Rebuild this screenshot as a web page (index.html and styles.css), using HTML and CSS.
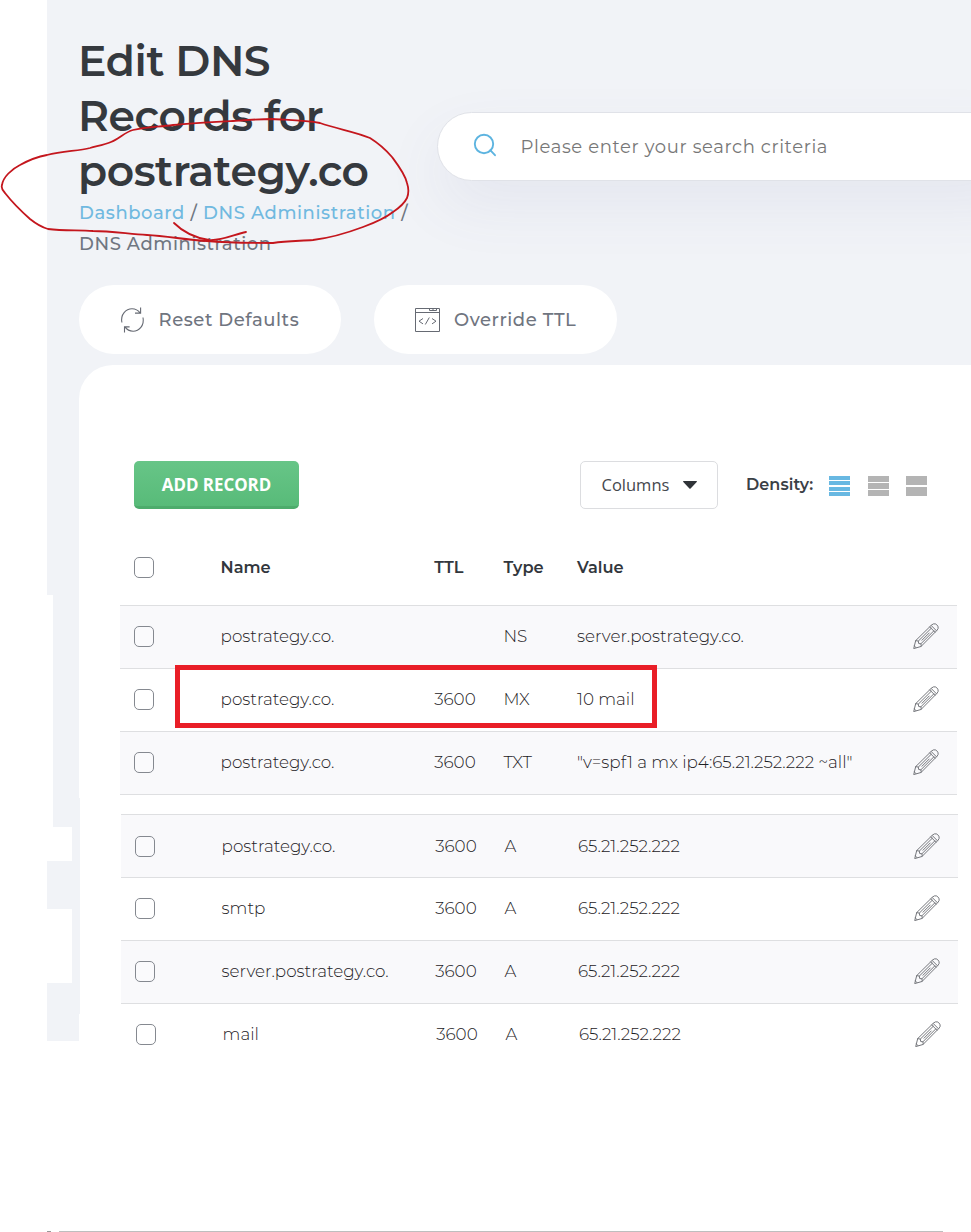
FILE: index.html
```
<!DOCTYPE html>
<html lang="en">
<head>
<meta charset="utf-8">
<title>Edit DNS Records</title>
<link rel="stylesheet" href="styles.css">
</head>
<body>
<svg class="defs" width="0" height="0">
  <symbol id="pencil" viewBox="0 0 26 26">
    <g fill="none" stroke="#75777c" stroke-width="1" stroke-linejoin="round" stroke-linecap="round">
      <path d="M.8 25.2 2.7 17.6 18.7 1.9Q20.5.2 22.8 1L25 3.2Q25.8 5.5 24 7.3L8.3 23.2Z"/>
      <path d="M2.7 17.6 5.3 18.1 5.7 20.5 7.9 20.8 8.3 23.2M1.4 23 3 24.6"/>
      <path d="M5.3 18.1 18.3 5.2M7.9 20.8 20.8 7.9M9 17.2 16.2 10"/>
      <path d="M16.7 3.9 22 9.2M18.2 2.5 23.5 7.8"/>
    </g>
  </symbol>
</svg>
<div class="page">
  <main class="app">
    <header class="header">
      <div class="heading">
        <h1 class="title">Edit DNS<br>Records for<br>postrategy.co</h1>
        <nav class="crumbs"><a>Dashboard</a><span class="slash">/</span><a>DNS Administration</a><span class="slash">/</span><br><span>DNS Administration</span></nav>
      </div>
      <div class="search">
        <svg class="search-icon" width="24" height="24" viewBox="0 0 24 24" fill="none" stroke="#5db4e0" stroke-width="1.9"><circle cx="11" cy="11" r="9.2"/><path d="M17.2 17.2 22 22.2" stroke-linecap="round"/></svg>
        <span class="placeholder">Please enter your search criteria</span>
      </div>
    </header>
    <div class="actions">
      <div class="pill reset">
        <svg width="25" height="26" viewBox="0 0 25 26" fill="none" stroke="#666a73" stroke-width="1.1"><path d="M1.9 15.5C.3 7.5 6 1.8 12 1.8c3.6 0 6.1 1.4 8.2 4.3M20.6.5v5.6H15"/><path d="M23 10.5C24.6 18.5 19 24.2 13.1 24.2c-3.6 0-6.1-1.4-8.2-4.3M4.5 25.5v-5.6h5.1"/></svg>
        <span>Reset Defaults</span>
      </div>
      <div class="pill override">
        <svg width="26" height="25" viewBox="0 0 26 25" fill="none" stroke="#666a73" stroke-width="1"><path d="M1.5 1.5h24v23h-24zM1.5 5.5h24M15.5 1.5v2h7v-2M19 1.5v2"/><path d="m9 11.5-4 2.7 4 2.7M18 11.5l4 2.7-4 2.7M15.3 10.5l-4 7"/></svg>
        <span>Override TTL</span>
      </div>
    </div>
    <section class="card">
      <div class="toolbar">
        <button class="add">ADD RECORD</button>
        <button class="columns"><span>Columns</span><svg width="14" height="8" viewBox="0 0 14 8"><path d="M.5 0h13q.8.2.2 1L7.6 7.5q-.6.6-1.2 0L.3 1Q-.2.2.5 0z" fill="#2f3338"/></svg></button>
        <span class="density">Density:</span>
        <span class="bars four"><i></i><i></i><i></i><i></i></span>
        <span class="bars three"><i></i><i></i><i></i></span>
        <span class="bars two"><i></i><i></i></span>
      </div>
      <div class="row head"><i class="box"></i><b>Name</b><b>TTL</b><b>Type</b><b>Value</b></div>
      <div class="group">
        <div class="row shade up"><i class="box"></i><span>postrategy.co.</span><span></span><span>NS</span><span>server.postrategy.co.</span><svg class="pencil"><use href="#pencil"/></svg></div>
        <div class="row up"><i class="box"></i><span>postrategy.co.</span><span>3600</span><span>MX</span><span>10 mail</span><svg class="pencil"><use href="#pencil"/></svg></div>
        <div class="row shade last up"><i class="box"></i><span>postrategy.co.</span><span>3600</span><span>TXT</span><span>"v=spf1 a mx ip4:65.21.252.222 ~all"</span><svg class="pencil"><use href="#pencil"/></svg></div>
      </div>
      <div class="group lower">
        <div class="row shade"><i class="box"></i><span>postrategy.co.</span><span>3600</span><span>A</span><span>65.21.252.222</span><svg class="pencil"><use href="#pencil"/></svg></div>
        <div class="row up"><i class="box"></i><span>smtp</span><span>3600</span><span>A</span><span>65.21.252.222</span><svg class="pencil"><use href="#pencil"/></svg></div>
        <div class="row shade up"><i class="box"></i><span>server.postrategy.co.</span><span>3600</span><span>A</span><span>65.21.252.222</span><svg class="pencil"><use href="#pencil"/></svg></div>
        <div class="row shifted up"><i class="box"></i><span>mail</span><span>3600</span><span>A</span><span>65.21.252.222</span><svg class="pencil"><use href="#pencil"/></svg></div>
      </div>
    </section>
  </main>
  <footer class="rule"><i class="dot"></i><i class="line"></i></footer>
  <div class="patch a"></div>
  <div class="patch b"></div>
  <div class="patch c"></div>
  <div class="sliver"></div>
  <div class="marker"></div>
  <svg class="scribble" width="420" height="260" viewBox="0 0 420 260" fill="none" stroke="#c4161d" stroke-width="1.8" stroke-linecap="round"><path d="M2 185C3 177 12 169 20 165C29 160 36 157 47 155C63 151 78 151 90 148C97 146 104 145 111 142C119 139 125 132 133 130C146 127 158 127 173 125C192 123 213 122 233 121C247 120 258 119 273 119C289 120 305 120 320 123C337 129 356 132 370 138C378 143 386 150 392 157C398 165 405 174 407 183C409 189 409 193 407 198C404 204 399 208 393 212C384 219 374 223 363 227C347 233 330 238 313 240C299 241 286 241 273 243C250 243 229 243 207 241C187 240 167 236 147 235C129 234 111 231 93 231C78 230 63 231 48 229C41 227 35 223 30 219C21 211 12 202 5 193C2 190 1 188 2 185Z"/><path d="M174 223C184 233 196 238 209 240C222 241 235 234 246 232"/></svg>
</div>
</body>
</html>
```
FILE: styles.css
```
* { box-sizing: border-box; }
body { margin: 0; background: #fff; font-family: Montserrat, Inter, "Noto Sans", sans-serif; color: #3a4046; }
.defs { position: absolute; }
.page { position: relative; width: 971px; height: 1232px; overflow: hidden; display: flex; flex-direction: column; justify-content: space-between; }
.app { margin-left: 47px; height: 1041px; background: #f1f3f7; padding: 33px 0 0 32px; }
.header { display: flex; height: 252px; white-space: nowrap; }
.heading { width: 358px; }
.title { margin: 0 0 0 -1px; padding-top: 1px; font-size: 42.5px; line-height: 55px; height: 165px; font-weight: 600; letter-spacing: -.45px; color: #35393e; }
.crumbs { font-size: 18px; font-weight: 500; line-height: 31px; color: #6f7681; letter-spacing: .58px; }
.crumbs a { color: #70b9e0; }
.slash { padding: 0 5.6px; }
.search { flex: 1; height: 69px; margin: 79px -60px 0 0; border: 1px solid #e0e2e8; border-radius: 35px; background: #fff; display: flex; align-items: center; padding-left: 35px; box-shadow: 0 25px 60px rgba(90, 90, 150, .08); }
.placeholder { font-size: 18px; font-weight: 400; color: #777; letter-spacing: .62px; margin-left: 23.5px; }
.search-icon { margin-top: -3px; }
.actions { display: flex; gap: 33px; height: 80px; }
.pill { height: 69px; border-radius: 35px; background: #fff; display: flex; align-items: center; font-size: 18px; font-weight: 500; color: #70757f; white-space: nowrap; letter-spacing: .56px; }
.reset { width: 262px; padding-left: 41px; gap: 13.5px; }
.override { width: 243px; padding-left: 40px; gap: 14px; }
.card { background: #fff; height: 690px; border-radius: 34px 0 0 0; padding: 96px 0 0 41px; }
.toolbar { display: flex; align-items: center; height: 48px; padding-left: 14px; margin-bottom: 20px; }
.add { width: 165px; height: 48px; border: 0; border-bottom: 3px solid #4dac6c; border-radius: 5px; background: linear-gradient(#67c587, #58bb79); color: #fff; font: 700 16.9px "Open Sans", sans-serif; padding: 2px 0 0; }
.columns { margin-left: 281px; width: 138px; height: 48px; border: 1px solid #dcdde0; border-radius: 5px; background: #fff; color: #44484d; font: 400 16.5px "Open Sans", sans-serif; display: flex; align-items: center; padding: 0 0 1px 20.5px; gap: 13.5px; }
.density { font-size: 16px; font-weight: 600; letter-spacing: .1px; margin-left: 28px; width: 83px; padding-bottom: 2px; }
.bars { width: 21px; height: 20px; display: flex; flex-direction: column; justify-content: space-between; margin: 2px 0 0 18px; }
.bars i { background: #b4b4b4; }
.four { margin-left: 0; }
.four i { background: #68b8e2; height: 4px; }
.three i { height: 6px; }
.two { margin-left: 17px; }
.two i { height: 9px; }
.row { display: grid; grid-template-columns: 86.6px 213.6px 69.2px 73.6px 336.5px 26px; align-items: center; width: 837px; height: 63px; padding-left: 14px; border-top: 1px solid #dedfe1; font-size: 16.75px; font-weight: 300; white-space: nowrap; color: #1d2125; }
.head { height: 76px; border: 0; font-size: 16.2px; color: #32373d; }
.head b { font-weight: 600; }
.shade { background: #f9f9fb; }
.last { height: 64px; border-bottom: 1px solid #dedfe1; }
.box { width: 20px; height: 21px; border: 1px solid #858990; border-radius: 5px; background: #fff; }
.shade .box { background: #fafafc; }
.pencil { width: 26px; height: 26px; }
.lower { margin: 19px 0 0 1px; }
.shifted { padding-left: 15px; }
.up { padding-bottom: 2px; }
.rule { display: flex; height: 1px; padding-left: 47px; gap: 8px; }
.dot { width: 4px; background: #999; }
.line { width: 884px; background: #bebebe; }
.patch { position: absolute; left: 0; background: #fff; }
.a { top: 595px; width: 53px; height: 232px; }
.b { top: 827px; width: 72px; height: 34px; }
.c { top: 909px; width: 72px; height: 74px; }
.sliver { position: absolute; left: 79px; top: 798px; width: 1px; height: 216px; background: #f1f3f7; }
.marker { position: absolute; left: 175px; top: 665px; width: 482px; height: 63px; border: 5px solid #e91e27; }
.scribble { position: absolute; left: 0; top: 0; }
```
